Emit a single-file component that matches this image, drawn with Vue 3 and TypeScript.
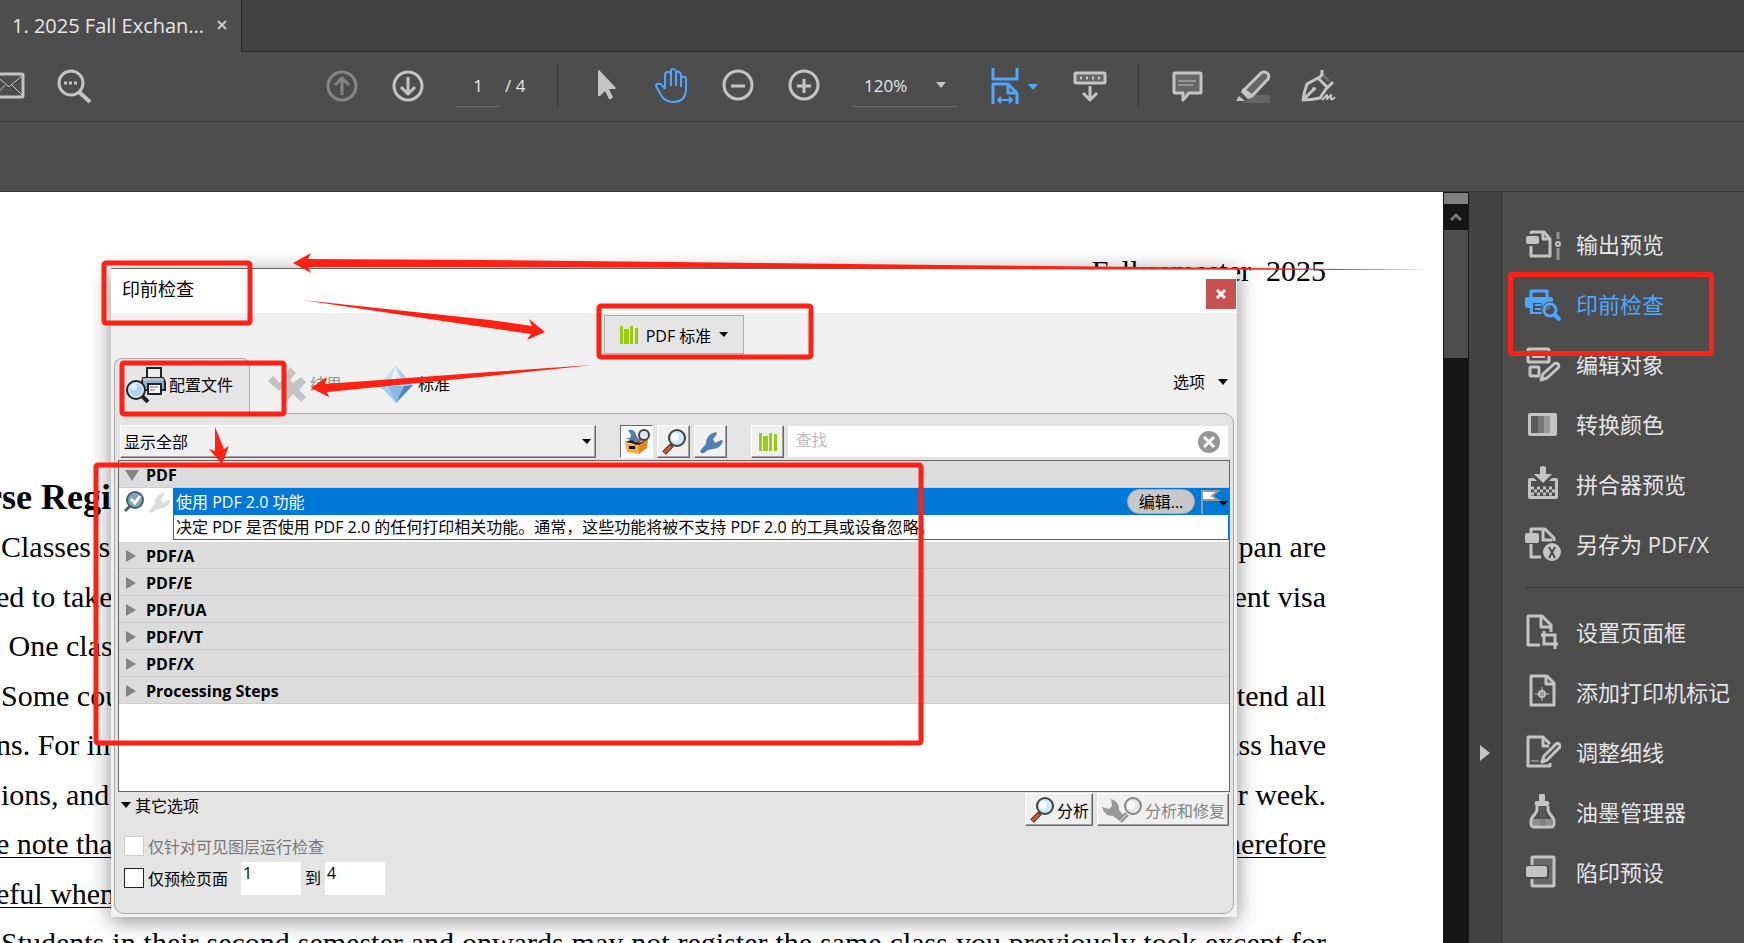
<script setup lang="ts">
import { ref } from 'vue'

interface Tool { label: string; icon: string; active?: boolean }
interface Line { left: string; right: string; underline?: boolean; cont?: boolean }

const page = ref('1')
const zoom = ref('120%')
const filter = ref('显示全部')
const search = ref('')
const visibleOnly = ref(false)
const pagesOnly = ref(false)
const fromPage = ref('1')
const toPage = ref('4')

const S = 'fill="none" stroke="#c4c4c4" stroke-width="3" stroke-linejoin="round"'

const tools: Tool[] = [
  {
    label: '输出预览',
    icon: `<path ${S} d="M6 8V7a1 1 0 0 1 1-1h12l6 7v17H6V20"/><path ${S} stroke-width="2" d="M18 6v7h7"/><rect x="1" y="10" width="13" height="8" rx="2" fill="#c4c4c4"/><path d="M33 6v7M33 22v12" stroke="#949494" stroke-width="3"/><circle cx="33" cy="18" r="2" fill="none" stroke="#c4c4c4" stroke-width="2"/>`,
  },
  {
    label: '印前检查',
    active: true,
    icon: `<path d="M6 12V5h16v7" fill="none" stroke="#4ea6ff" stroke-width="3" stroke-linejoin="round"/><path d="M2 11h24a2 2 0 0 1 2 2v3a9 9 0 0 0-11 12H5v-6H2a2 2 0 0 1-2-2v-7a2 2 0 0 1 2-2z" fill="#4ea6ff"/><path d="M8 17h9l-1 9H8z" fill="#4d4d4d"/><path d="M10 19h6M10 23h6" stroke="#4ea6ff" stroke-width="2"/><circle cx="25" cy="24" r="6" fill="#4d4d4d" stroke="#4ea6ff" stroke-width="3"/><path d="M22 24a3 3 0 0 1 3-3" fill="none" stroke="#4ea6ff"/><path d="M30 29l5 5" stroke="#4ea6ff" stroke-width="4"/>`,
  },
  {
    label: '编辑对象',
    icon: `<rect x="3" y="3" width="21" height="13" rx="1" ${S}/><path d="M7 11h13" stroke="#c4c4c4" stroke-width="2"/><rect x="5" y="21" width="9" height="9" rx="1" ${S}/><path ${S} stroke-width="2" d="M16 34l2-6 11-10a2 2 0 0 1 4 4L22 32z"/><path d="M15 35l2-5 3 3z" fill="#c4c4c4"/>`,
  },
  {
    label: '转换颜色',
    icon: `<rect x="3" y="7" width="29" height="23" rx="2" fill="#c4c4c4"/><rect x="6" y="10" width="7" height="17" fill="#5a5a5a"/><rect x="13" y="10" width="6" height="17" fill="#777"/><rect x="19" y="10" width="6" height="17" fill="#999"/>`,
  },
  {
    label: '拼合器预览',
    icon: `<path d="M15 1q3-2 6 0v7h6l-9 9-9-9h6z" fill="#c4c4c4"/><path d="M9 12H5a2 2 0 0 0-2 2v17a2 2 0 0 0 2 2h26a2 2 0 0 0 2-2V14a2 2 0 0 0-2-2h-4l-3 3h6v15H6V15h6z" fill="#c4c4c4"/><path d="M6 22h24M9 25h21M6 28h24" stroke="#c4c4c4" stroke-width="3" stroke-dasharray="3 3"/>`,
  },
  {
    label: '另存为 PDF/X',
    icon: `<path ${S} d="M6 7V3h14l9 9v3M6 18v13h10M18 3v11h9"/><rect x="0" y="7" width="14" height="10" rx="2" fill="#c4c4c4"/><circle cx="27" cy="26" r="9" fill="#c4c4c4"/><path d="M24 21l6 11M30 21l-6 11" stroke="#4d4d4d" stroke-width="2"/>`,
  },
]

const tools2: Tool[] = [
  {
    label: '设置页面框',
    icon: `<path ${S} d="M15 31H3V2h14l9 9v7M16 2v11h10"/><path d="M19 17v13h14M16 21h14v14" fill="none" stroke="#c4c4c4" stroke-width="3"/>`,
  },
  {
    label: '添加打印机标记',
    icon: `<path ${S} d="M6 2h16l7 7v22H6z"/><path ${S} stroke-width="2" d="M21 2v8h7"/><circle cx="17" cy="20" r="3" fill="none" stroke="#c4c4c4" stroke-width="2"/><path d="M17 13v14M10 20h14" stroke="#c4c4c4" stroke-width="1"/>`,
  },
  {
    label: '调整细线',
    icon: `<path ${S} d="M25 29v3H3V3h15l7 7"/><path ${S} stroke-width="2" d="M18 4v8h6M17 28l2-6L31 10a2 2 0 0 1 3 4L22 26z"/><path d="M6 27h8" stroke="#c4c4c4" stroke-width="1"/>`,
  },
  {
    label: '油墨管理器',
    icon: `<path d="M14 7V2a3 3 0 0 1 6 0v5h3a3 3 0 0 1 0 5H11a3 3 0 0 1 0-5z" fill="#c4c4c4"/><path d="M8 25h19v6a2 2 0 0 1-2 2H9a2 2 0 0 1-2-2z" fill="#8d8d8d"/><path ${S} d="M12 12v4c0 3-6 7-6 11v3a3 3 0 0 0 3 3h17a3 3 0 0 0 3-3v-3c0-4-6-8-6-11v-4"/><path d="M16 12v20M19 12v20" stroke="#6b6b6b"/>`,
  },
  {
    label: '陷印预设',
    icon: `<rect x="7" y="3" width="22" height="29" rx="1" fill="#666" stroke="#c4c4c4" stroke-width="3"/><rect x="0" y="11" width="24" height="14" rx="2" fill="#4d4d4d"/><rect x="1" y="12" width="21" height="11" rx="2" fill="#c4c4c4"/>`,
  },
]

const running = 'Fall semester  2025'

const lines: Line[] = [
  { left: 'Classes s', right: 'pan are' },
  { left: 'ed to take', right: 'ent visa', cont: true },
  { left: ' One clas', right: '' },
  { left: 'Some cou', right: 'tend all' },
  { left: 'ns. For ins', right: 'ass have', cont: true },
  { left: 'ions, and', right: 'r week.' },
  { left: 'e note tha', right: 'herefore', underline: true, cont: true },
  { left: 'eful when', right: '', underline: true, cont: true },
]

const groups = ['PDF/A', 'PDF/E', 'PDF/UA', 'PDF/VT', 'PDF/X', 'Processing Steps']
</script>

<template>
  <div class="app">
    <nav class="tabs">
      <div class="tab">
        <span>1. 2025 Fall Exchan...</span>
        <button class="tab-close" aria-label="关闭标签">
          <svg width="12" height="12" viewBox="0 0 12 12"><path d="M2 2l8 8M10 2l-8 8" stroke="#c8c8c8" stroke-width="2" /></svg>
        </button>
      </div>
    </nav>

    <header class="toolbar">
      <button aria-label="邮件">
        <svg class="ic" viewBox="0 0 36 36"><rect x="3" y="6" width="29" height="23" rx="1" /><path class="thin" d="M4 7l13 11q1 1 2 0L32 7M4 28l10-11M32 28L21 17" /></svg>
      </button>
      <button aria-label="查找">
        <svg class="ic" viewBox="0 0 36 36"><circle cx="14" cy="15" r="12" /><path d="M22 24l11 10" stroke-width="4" /><path d="M7 15h3M12 15h3M17 15h3" /></svg>
      </button>
      <button class="up" aria-label="上一页">
        <svg class="ic dim" viewBox="0 0 36 36"><circle cx="18" cy="18" r="14" /><path d="M18 27V11M11 17l7-7 7 7" /></svg>
      </button>
      <button aria-label="下一页">
        <svg class="ic" viewBox="0 0 36 36"><circle cx="18" cy="18" r="14" /><path d="M18 9v16M11 19l7 7 7-7" /></svg>
      </button>
      <div class="pager">
        <input v-model="page" aria-label="页码" />
        <span>/ 4</span>
      </div>
      <i class="sep"></i>
      <button aria-label="选择工具">
        <svg class="ic" viewBox="0 0 36 36"><path class="solid" d="M10 3q0-2 2 0l16 17-1 1h-6l4 8q-2 3-4 2l-4-8-5 5h-2z" /></svg>
      </button>
      <button aria-label="手形工具">
        <svg class="ic blue" viewBox="0 0 36 36"><path stroke-width="2" d="M11 21V7q0-3 3-3t3 2V3q0-2 2-2t3 2v2q1-2 3-1t2 3v2q5-1 5 2v10q0 13-13 13-8 0-12-7L2 18q0-3 5-2l4 5M17 5v13M22 5v13M27 8v11" /></svg>
      </button>
      <button aria-label="缩小">
        <svg class="ic" viewBox="0 0 36 36"><circle cx="18" cy="17" r="14" /><path d="M11 18h14" /></svg>
      </button>
      <button aria-label="放大">
        <svg class="ic" viewBox="0 0 36 36"><circle cx="18" cy="17" r="14" /><path d="M11 18h14M18 11v14" /></svg>
      </button>
      <label class="zoom">
        <select v-model="zoom" aria-label="缩放比例"><option>120%</option></select>
        <svg width="10" height="6" viewBox="0 0 10 6"><path d="M0 0h10L5 6z" fill="#c4c4c4" /></svg>
      </label>
      <button class="wide" aria-label="适合宽度">
        <svg class="ic fit blue" viewBox="0 0 54 36"><path d="M5 0v11h24V0M5 36V16h15l9 9v11M20 16v9h9" /><path stroke-width="2" d="M10 32h14M13 29l-3 3 3 3M21 29l3 3-3 3" /><path d="M40 16h10l-5 6z" fill="#4ea6ff" stroke="none" /></svg>
      </button>
      <button aria-label="工具栏">
        <svg class="ic" viewBox="0 0 36 36"><rect x="3" y="5" width="30" height="10" rx="1" fill="#666" /><path d="M8 10h22" stroke-dasharray="2 4" /><path d="M18 18v13M11 25l7 7 7-7" /></svg>
      </button>
      <i class="sep"></i>
      <button aria-label="注释">
        <svg class="ic" viewBox="0 0 36 36"><path d="M6 5h25a1 1 0 0 1 1 1v18a1 1 0 0 1-1 1H20l-6 7v-7H6a1 1 0 0 1-1-1V6a1 1 0 0 1 1-1z" fill="#666" /><path class="thin" d="M9 13h18M9 17h15" /></svg>
      </button>
      <button aria-label="荧光笔">
        <svg class="ic" viewBox="0 0 36 36"><path d="M17 27h18v8H8z" fill="#666" stroke="none" /><path d="M9 22L26 5q3-2 6 0t1 6L17 28z" fill="#666" /><path class="solid" d="M8 20l10 9-5 2-7-7zM1 33l3-5 6 5z" /></svg>
      </button>
      <button aria-label="签名">
        <svg class="ic" viewBox="0 0 36 36"><path d="M21 3l9 11-4-1-7-6z" fill="#707070" stroke="none" /><path d="M21 2v4q-1 3-4 4L6 16Q3 24 2 32q9 0 17-2l6-9 7-7M17 10l9 9M3 31l10-10" stroke-width="3" /><circle class="solid" cx="13" cy="21" r="2" /><path stroke-width="2" d="M21 32l5-5v4l4-4v4q2 1 4-2" /></svg>
      </button>
    </header>

    <div class="subbar"></div>

    <main class="work">
      <section class="doc">
        <div class="paper">
          <p class="running">{{ running }}</p>
          <h2>rse Regi</h2>
          <div class="lines">
            <p v-for="(l, i) in lines" :key="i" :class="{ under: l.underline, cont: l.cont }">
              <span>{{ l.left }}</span><span>{{ l.right }}</span>
            </p>
            <p class="full">Students in their second semester and onwards may not register the same class you previously took except for</p>
          </div>
        </div>

        <div class="dialog" role="dialog" aria-label="印前检查">
          <div class="title">
            <h1>印前检查</h1>
            <button class="close" aria-label="关闭">
              <svg width="10" height="10" viewBox="0 0 10 10"><path d="M1 1l8 8M9 1L1 9" stroke="#fff" stroke-width="3" /></svg>
            </button>
          </div>

          <div class="library">
            <button>
              <svg width="18" height="18" viewBox="0 0 18 18"><path d="M0 0h3v18H0zM4 3h5v15H4zM10 0h3v18h-3zM15 2h3v16h-3z" fill="#9c1" /></svg>
              PDF 标准
              <svg width="9" height="5" viewBox="0 0 9 5"><path d="M0 0h9L5 5z" /></svg>
            </button>
          </div>

          <div class="modes" role="tablist">
            <button role="tab" aria-selected="true" class="on">
              <svg width="40" height="36" viewBox="0 0 40 36">
                <path d="M21 1h14v10H21z" fill="#eee" stroke="#222" stroke-width="2" />
                <path d="M17 11h20l2 4v8H16v-8z" fill="#86b2dd" stroke="#222" stroke-width="2" />
                <path d="M17 11h20l1 3H17z" fill="#b9c0c8" />
                <path d="M22 17h13v10H22z" fill="#f8f8f8" stroke="#222" stroke-width="2" />
                <path d="M24 20h8M24 23h5" stroke="#777" />
                <path d="M15 28l7 7" stroke="#222" stroke-width="4" />
                <circle cx="10" cy="23" r="9" fill="#a9d8ee" stroke="#222" stroke-width="2" />
                <circle cx="10" cy="23" r="7" fill="none" stroke="#e9f6fc" stroke-width="1" /><circle cx="8" cy="20" r="3" fill="#def1fa" />
              </svg>
              <span>配置文件</span>
            </button>
            <button role="tab" disabled>
              <svg width="39" height="36" viewBox="0 0 39 36"><path d="M0 15l5-5 7 7L22 1l6 6-6 7 3 3 8-6 5 5-7 8 7 7-5 5-8-8-7 8-5-5 6-8-3-2-5 4z" fill="#c3c3c3" /></svg>
              <span>结果</span>
            </button>
            <button role="tab">
              <svg width="34" height="37" viewBox="0 0 34 37"><path d="M17 0l17 19-17 18L0 19z" fill="#a9cdf0" /><path d="M17 0L9 20 0 19z" fill="#c5def5" /><path d="M17 0v20H9z" fill="#f1f7fd" /><path d="M17 0l8 20h-8z" fill="#dbeafa" /><path d="M17 37l-8-17h16z" fill="#8ab9e4" /><path d="M17 37l8-17 9-1z" fill="#4c87bc" /></svg>
              <span>标准</span>
            </button>
            <button class="options">
              <span>选项</span>
              <svg width="10" height="6" viewBox="0 0 10 6"><path d="M0 0h10L5 6z" /></svg>
            </button>
          </div>

          <div class="panel">
            <div class="filters">
              <label class="picker raised">
                <select v-model="filter" aria-label="筛选"><option>显示全部</option></select>
                <svg width="9" height="5" viewBox="0 0 9 5"><path d="M0 0h9L5 5z" /></svg>
              </label>
              <button class="sq raised pressed" aria-label="检查和修正">
                <svg width="26" height="26" viewBox="0 0 26 26"><path d="M1 9q6 1 6-3L4 1q7-1 8 5l4 6H8Q5 10 1 9z" fill="#4f7fae" /><path d="M17 10l-6 6" stroke="#b84a3a" stroke-width="3" /><circle cx="20" cy="6" r="5" fill="#d8eaf3" stroke="#444" stroke-width="2" /><path d="M1 14l14 2v9L3 23z" fill="#f6ad3f" /><path d="M15 16l9-6-1 9-8 6z" fill="#d98a22" /><path d="M1 13l6-2 8 3 9-4-9 6z" fill="#222" /><path d="M5 17h6v3H5z" fill="#111" /></svg>
              </button>
              <button class="sq raised" aria-label="检查">
                <svg class="lens" width="26" height="26" viewBox="0 0 26 26"><path d="M11 16l-8 8" stroke="#4b2a24" stroke-width="5" /><path d="M10 17l-7 7" stroke="#d2593c" stroke-width="3" /><circle cx="16" cy="9" r="8" fill="#cfe9f4" stroke="#3d4144" stroke-width="2" /><circle cx="14" cy="8" r="4" fill="#f4fbfe" /></svg>
              </button>
              <button class="sq raised" aria-label="修正">
                <svg width="26" height="26" viewBox="0 0 26 26"><path d="M2 22l6-7Q8 5 18 3l1 2-4 5 2 4 6-3 2 1q-2 7-10 8l-5 1-4 3q-3 1-4-2z" fill="#4f7fae" /></svg>
              </button>
              <button class="sq raised books" aria-label="资料库">
                <svg width="18" height="18" viewBox="0 0 18 18"><path d="M0 0h3v18H0zM4 3h5v15H4zM10 0h3v18h-3zM15 1h3v17h-3z" fill="#9c1" /></svg>
              </button>
              <div class="search">
                <input v-model="search" placeholder="查找" aria-label="查找" />
                <button aria-label="清除">
                  <svg width="22" height="22" viewBox="0 0 22 22"><circle cx="11" cy="11" r="11" fill="#969696" /><path d="M6 6l10 10M16 6L6 16" stroke="#fff" stroke-width="3" /></svg>
                </button>
              </div>
            </div>

            <div class="list">
              <button class="group">
                <svg width="14" height="12" viewBox="0 0 14 12"><path d="M0 1h14L7 12z" fill="#848484" /></svg>PDF
              </button>
              <div class="item">
                <div class="marks">
                  <svg width="22" height="22" viewBox="0 0 22 22"><path d="M2 20l5-5" stroke="#44606c" stroke-width="3" /><circle cx="12" cy="9" r="8" fill="#7fa5b8" stroke="#44606c" stroke-width="2" /><path d="M8 8l4 4 5-7" fill="none" stroke="#fff" stroke-width="3" /></svg>
                  <svg width="24" height="24" viewBox="0 0 26 26"><path d="M2 22l6-7Q8 5 18 1l1 3-4 5 2 4 6-3 2 1q-2 7-10 8l-5 1-4 3q-3 1-4-1z" fill="#dcdcdc" /></svg>
                </div>
                <div class="entry">
                  <div class="name">
                    <span>使用 PDF 2.0 功能</span>
                    <button class="edit">编辑...</button>
                    <button class="flag" aria-label="标记">
                      <svg width="29" height="25" viewBox="0 0 29 25"><path d="M2 25V2h16l-6 5 6 4H2" fill="#fff" stroke="#999" stroke-width="2" /><path d="M19 12h9l-5 5z" fill="#000" /></svg>
                    </button>
                  </div>
                  <p>决定 PDF 是否使用 PDF 2.0 的任何打印相关功能。通常，这些功能将被不支持 PDF 2.0 的工具或设备忽略。</p>
                </div>
              </div>
              <button v-for="g in groups" :key="g" class="group">
                <svg width="14" height="14" viewBox="0 0 14 14"><path d="M1 1v12l10-6z" fill="#848484" /></svg>{{ g }}
              </button>
            </div>

            <div class="foot">
              <button class="more">
                <svg width="10" height="6" viewBox="0 0 10 6"><path d="M0 0h10L5 6z" /></svg>其它选项
              </button>
              <div class="actions">
                <button class="raised">
                  <svg width="26" height="26" viewBox="0 0 26 26"><path d="M11 16l-8 8" stroke="#4b2a24" stroke-width="5" /><path d="M10 17l-7 7" stroke="#d2593c" stroke-width="3" /><circle cx="16" cy="9" r="8" fill="#cfe9f4" stroke="#3d4144" stroke-width="2" /><circle cx="14" cy="8" r="4" fill="#f4fbfe" /></svg>分析
                </button>
                <button class="raised" disabled>
                  <svg width="42" height="26" viewBox="0 0 42 26"><path d="M1 10l7 2 3-3-1-7q9 3 8 11l7 8-5 4-8-6Q3 19 1 10z" fill="#999" /><path d="M26 17l-7 7" stroke="#888" stroke-width="5" /><path d="M26 17l-7 7" stroke="#bbb" stroke-width="2" /><circle cx="32" cy="9" r="8" fill="#e6e6e6" stroke="#858585" stroke-width="2" /><circle cx="30" cy="8" r="4" fill="#f8f8f8" /></svg>分析和修复
                </button>
              </div>
            </div>

            <label class="check off">
              <input v-model="visibleOnly" type="checkbox" disabled /><span>仅针对可见图层运行检查</span>
            </label>
            <div class="range">
              <label class="check"><input v-model="pagesOnly" type="checkbox" /><span>仅预检页面</span></label>
              <input v-model="fromPage" class="num" aria-label="起始页" />
              <span class="to">到</span>
              <input v-model="toPage" class="num" aria-label="结束页" />
            </div>
          </div>
        </div>

        <svg class="notes" aria-hidden="true">
          <g fill="none" stroke="#ff2113" stroke-width="5">
            <rect x="104" y="71" width="146" height="60" rx="2" />
            <rect x="599" y="114" width="212" height="51" rx="2" />
            <rect x="122" y="171" width="162" height="51" rx="2" />
            <rect x="96" y="273" width="825" height="278" rx="2" />
          </g>
          <g fill="#ff2113">
            <path d="M293 71L311 61 308 67 480 68 940 73 1435 78 940 77 480 75 308 75 311 81z" />
            <path d="M302 108L490 128 532 134 529 127 545 140 527 148 531 142 490 136z" />
            <path d="M593 173L490 180 325 192 327 185 311 196 329 205 327 200 490 184z" />
            <path d="M215 235L224 257 229 254 222 272 209 257 215 259z" />
          </g>
        </svg>
      </section>

      <div class="scroll">
        <i class="split"></i>
        <button aria-label="向上滚动"><svg width="12" height="10" viewBox="0 0 12 10"><path d="M1 8l5-5 5 5" fill="none" stroke="#777" stroke-width="3" /></svg></button>
        <i class="thumb"></i>
      </div>
      <button class="strip" aria-label="折叠面板"><svg width="10" height="16" viewBox="0 0 10 16"><path d="M0 0v16l10-8z" fill="#c4c4c4" /></svg></button>

      <aside class="side">
        <button v-for="t in tools" :key="t.label" :class="{ active: t.active }">
          <svg width="36" height="36" viewBox="0 0 36 36" v-html="t.icon"></svg><span>{{ t.label }}</span>
        </button>
        <hr />
        <button v-for="t in tools2" :key="t.label">
          <svg width="36" height="36" viewBox="0 0 36 36" v-html="t.icon"></svg><span>{{ t.label }}</span>
        </button>
        <i class="ring"></i>
      </aside>
    </main>
  </div>
</template>

<style>
body { margin: 0; background: #4d4d4d; }
</style>

<style scoped>
.app {
  height: 100vh;
  display: flex;
  flex-direction: column;
  overflow: hidden;
  background: #4d4d4d;
  color: #e6e6e6;
  font-family: "Open Sans", "Noto Sans CJK SC", sans-serif;
}
.app * { box-sizing: border-box; }
button, input, select {
  font: inherit;
  color: inherit;
  margin: 0;
  padding: 0;
  border: 0;
  border-radius: 0;
  background: none;
  outline: none;
  appearance: none;
}
svg { display: block; flex: none; }
p, h1, h2 { margin: 0; font-weight: 400; }

.tabs { height: 52px; flex: none; background: #424242; border-bottom: 1px solid #2b2b2b; }
.tab {
  width: 242px;
  height: 52px;
  padding: 0 13px 2px 12px;
  display: flex;
  align-items: center;
  justify-content: space-between;
  background: #4d4d4d;
  border-right: 1px solid #2b2b2b;
  font-size: 20px;
  white-space: nowrap;
}

.toolbar {
  height: 70px;
  flex: none;
  display: flex;
  align-items: center;
  gap: 30px;
  margin-left: -9px;
  padding-bottom: 2px;
  border-bottom: 1px solid #3a3a3a;
  font-size: 17px;
}
.toolbar button { width: 36px; flex: none; }
.toolbar .wide { width: 54px; }
.toolbar .up { margin-left: 201px; }
.ic { width: 36px; height: 36px; fill: none; stroke: #c4c4c4; stroke-width: 3; stroke-linejoin: round; }
.ic.fit { width: 54px; }
.dim { stroke: #858585; }
.blue { stroke: #4ea6ff; }
.thin { stroke-width: 1px; }
.solid { fill: #c4c4c4; stroke: none; }
.pager { display: flex; align-items: center; gap: 5px; flex: none; }
.pager input { width: 44px; height: 42px; text-align: center; border-bottom: 1px solid #6a6a6a; }
.pager span { width: 22px; white-space: nowrap; }
.sep { width: 1px; height: 42px; background: #383838; flex: none; }
.zoom { width: 106px; height: 42px; flex: none; display: flex; align-items: center; padding: 0 12px; border-bottom: 1px solid #6a6a6a; }
.zoom select { flex: 1; }

.subbar { height: 70px; flex: none; border-bottom: 1px solid #3a3a3a; }

.work { flex: 1; min-height: 0; display: flex; }
.doc { flex: 1; min-width: 0; position: relative; overflow: hidden; background: #fff; color: #000; }
.paper { padding: 59px 117px 0 0; font-family: "Liberation Serif", serif; font-size: 30px; white-space: pre; }
.running { text-align: right; line-height: 40px; }
.paper h2 { font-size: 36px; font-weight: 700; text-indent: -14px; line-height: 50px; margin-top: 181px; }
.lines { display: grid; grid-auto-rows: 50px 49px; line-height: 49px; }
.lines p { display: flex; justify-content: space-between; padding-left: 1px; }
.lines .under { text-decoration: underline; text-decoration-thickness: 1px; text-underline-offset: 3px; }
.lines .cont span:first-child { text-indent: -5px; }
.lines .full { display: block; white-space: normal; text-align: justify; text-align-last: justify; }

.dialog {
  position: absolute;
  left: 111px;
  right: 206px;
  top: 76px;
  background: #f0f0f0;
  font-size: 16px;
  box-shadow: 0 4px 20px rgba(0, 0, 0, 0.45);
  padding-bottom: 3px;
}
.title {
  height: 45px;
  display: flex;
  align-items: flex-end;
  justify-content: space-between;
  padding: 0 1px 4px 11px;
  background: #fff;
  border-top: 1px solid #666;
}
.title h1 { font-size: 18px; line-height: 24px; padding-bottom: 8px; }
.close { width: 30px; height: 30px; display: grid; place-items: center; background: #c75050; }
.library { height: 45px; padding-top: 2px; display: flex; justify-content: center; align-items: flex-start; }
.library button {
  width: 140px;
  height: 39px;
  display: flex;
  align-items: center;
  justify-content: center;
  gap: 8px;
  background: #e5e5e5;
  border: 1px solid #adadad;
  white-space: nowrap;
}
.modes { height: 55px; margin: 0 3px; display: flex; }
.modes button { display: flex; align-items: center; gap: 3px; padding: 0 0 3px 18px; white-space: nowrap; }
.modes span { padding-bottom: 3px; }
.modes button + button + button { padding-left: 37px; gap: 5px; }
.modes button:disabled { color: #999; }
.modes .on {
  width: 136px;
  height: 56px;
  padding-left: 11px;
  background: #e5e5e5;
  border: 1px solid #adadad;
  border-bottom: 0;
  border-radius: 8px 8px 0 0;
}
.modes button.options { margin-left: auto; padding: 0 6px 7px 0; gap: 13px !important; }
.panel {
  margin: 0 3px;
  height: 501px;
  padding: 11px 3px 0;
  background: #e4e4e4;
  border: 1px solid #aaa;
  border-radius: 0 10px 10px 10px;
}
.filters { display: flex; height: 33px; padding: 0 2px; }
.raised {
  background: #f0f0f0;
  border: 1px solid #fff;
  border-right-color: #696969;
  border-bottom-color: #696969;
  box-shadow: inset -1px -1px #a0a0a0;
}
.picker { flex: none; width: 43%; display: flex; align-items: center; padding: 0 4px 0 3px; margin-right: 24px; }
.picker select { flex: 1; }
.sq { width: 33px; margin-right: 4px; display: grid; place-items: center; flex: none; }
.books { margin-left: 20px; }
.pressed { background: #f8f8f8; border-color: #696969 #fff #fff #696969; box-shadow: none; }
.search { flex: 1; height: 31px; margin-top: 1px; display: flex; align-items: center; padding: 0 8px 0 7px; background: #fff; }
.search input { flex: 1; min-width: 0; padding-bottom: 3px; }
.search input::placeholder { color: #bdbdbd; opacity: 1; }

.list { min-height: 332px; margin-top: 2px; border: 1px solid #666; background: #fff; display: flex; flex-direction: column; }
.group {
  height: 27px;
  display: flex;
  align-items: center;
  gap: 7px;
  padding: 1px 0 0 6px;
  background: #dcdcdc;
  border-bottom: 1px solid #cdcdcd;
  font-weight: 700;
  text-align: left;
}
.item { display: flex; height: 54px; }
.marks { width: 54px; flex: none; display: flex; gap: 2px; padding: 3px 0 0 4px; }
.entry { flex: 1; }
.name { height: 27px; display: flex; align-items: center; background: #0078d7; color: #fff; padding-left: 3px; }
.name span { flex: 1; padding-bottom: 2px; }
.edit { width: 68px; height: 25px; border: 1px solid #aaa; border-radius: 13px; background: #c8c8c8; color: #000; line-height: 20px; }
.flag { margin-left: 5px; }
.entry p { height: 25px; line-height: 25px; padding-left: 2px; border: 1px solid #0078d7; border-top: 0; }

.foot { display: flex; justify-content: space-between; height: 43px; padding: 1px 1px 0 3px; }
.more { height: 24px; display: flex; align-items: center; gap: 4px; }
.actions { display: flex; gap: 4px; }
.actions button { height: 33px; padding: 0 3px; display: flex; align-items: center; gap: 2px; white-space: nowrap; }
.actions button:disabled { color: #848484; }
.check { display: flex; align-items: center; gap: 4px; height: 22px; }
.check input { width: 20px; height: 20px; background: #fff; border: 1px solid #222; }
.check span { padding-bottom: 1px; }
.off { color: #777; padding-left: 6px; }
.off input { border-color: #ccc; }
.range { display: flex; align-items: center; padding: 4px 0 0 6px; height: 38px; }
.range .check { margin-right: 13px; }
.to { margin: 0 4px; padding-bottom: 3px; }
.num { width: 60px; height: 33px; padding: 0 0 10px 2px; background: #fff; }

.notes { position: absolute; left: 0; top: 0; width: 100%; height: 100%; pointer-events: none; }

.scroll { width: 26px; flex: none; background: #161616; padding: 1px 1px 0; display: flex; flex-direction: column; }
.split { height: 11px; background: #808080; }
.scroll button { height: 26px; display: grid; place-items: center; }
.thumb { height: 128px; background: #4d4d4d; }
.strip { width: 33px; flex: none; background: #424242; border-right: 1px solid #383838; display: flex; align-items: center; padding: 0 11px; }
.strip svg { margin-top: 370px; }

.side { width: 242px; flex: none; position: relative; padding-top: 22px; font-size: 22px; }
.side button { width: 100%; height: 60px; display: flex; align-items: center; gap: 15px; padding-left: 23px; white-space: nowrap; }
.side button span { padding-bottom: 3px; }
.side .active { color: #4ea6ff; }
.side hr { height: 1px; margin: 13px 0 14px 23px; border: 0; background: #3a3a3a; }
.ring { position: absolute; left: 6px; top: 80px; width: 206px; height: 84px; border: 5px solid #ff2113; border-radius: 4px; }
</style>
